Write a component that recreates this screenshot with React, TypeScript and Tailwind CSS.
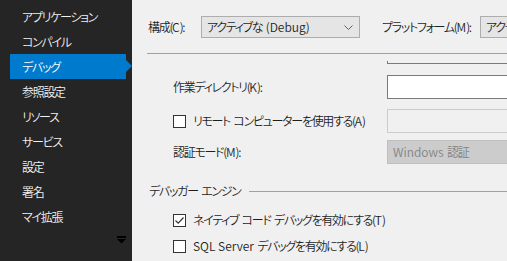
import { useState } from 'react';

const navItems = [
  'アプリケーション',
  'コンパイル',
  'デバッグ',
  '参照設定',
  'リソース',
  'サービス',
  '設定',
  '署名',
  'マイ拡張',
];

function Chevron() {
  return (
    <svg width="9" height="5" viewBox="0 0 9 5" className="shrink-0">
      <path d="M0.5 0.5 L4.5 4.5 L8.5 0.5" fill="none" stroke="#606060" strokeWidth="1" />
    </svg>
  );
}

function Checkbox({ checked }: { checked?: boolean }) {
  return (
    <div className="w-[13px] h-[13px] border border-[#333333] bg-white flex items-center justify-center shrink-0">
      {checked && (
        <svg width="11" height="11" viewBox="0 0 11 11">
          <path d="M1.5 5.5 L4.2 8.2 L9.5 2.5" fill="none" stroke="#333333" strokeWidth="1.2" />
        </svg>
      )}
    </div>
  );
}

// latin runs keep normal spacing
function L({ children }: { children: React.ReactNode }) {
  return <span className="tracking-normal [word-spacing:normal]">{children}</span>;
}

export default function App() {
  const [active, setActive] = useState('デバッグ');

  return (
    <div className="flex w-[507px] h-[261px] overflow-hidden text-[12px] leading-none font-[350] tracking-[-1.3px] [word-spacing:2px] font-['Noto_Sans_CJK_JP',sans-serif] [font-feature-settings:'palt']">
      {/* Sidebar */}
      <div className="relative w-[132px] shrink-0 bg-[#252526] pt-[4px]">
        {navItems.map((item) =>
          item === active ? (
            <div key={item} className="relative ml-[10px] w-[116px] h-[25px] flex items-center pl-[12px] bg-[#007acc] text-white">
              {item}
              <svg width="6" height="12" viewBox="0 0 6 12" className="absolute right-[-6px] top-[6px]">
                <path d="M0 0 L6 6 L0 12 Z" fill="#007acc" />
              </svg>
            </div>
          ) : (
            <div
              key={item}
              onClick={() => setActive(item)}
              className="h-[25px] flex items-center pl-[22px] text-[#f1f1f1] cursor-pointer"
            >
              {item}
            </div>
          )
        )}
        {/* scroll down marker */}
        <svg width="9" height="8" viewBox="0 0 9 8" className="absolute left-[117px] top-[236px]">
          <rect x="0" y="0" width="9" height="2" fill="#000" />
          <path d="M0 3 L9 3 L4.5 7.5 Z" fill="#000" />
        </svg>
      </div>

      {/* Main panel */}
      <div className="flex-1 bg-[#f0f0f0] flex flex-col text-[#1e1e1e] min-w-0">
        {/* Configuration / platform bar */}
        <div className="h-[53px] shrink-0 flex items-start pt-[16px] pl-[16px] whitespace-nowrap">
          <span className="w-[53px] shrink-0 h-[22px] flex items-center"><span>構成(<L>C</L>):</span></span>
          <div className="w-[159px] shrink-0 h-[22px] border border-[#adadad] bg-[#e5e5e5] flex items-center justify-between pl-[5px] pr-[6px]">
            <span>アクティブな <L>(Debug)</L></span>
            <Chevron />
          </div>
          <span className="ml-[22px] w-[98px] shrink-0 h-[22px] flex items-center"><span>プラットフォーム(<L>M</L>):</span></span>
          <div className="w-[60px] shrink-0 h-[22px] border border-[#adadad] border-r-0 bg-[#e5e5e5] flex items-center pl-[5px] overflow-hidden">
            <span>アクテ</span>
          </div>
        </div>
        <div className="ml-[15px] h-px bg-[#a0a0a0] shrink-0" />

        {/* Scrolled properties */}
        <div className="flex-1 flex flex-col overflow-hidden pt-[7px]">
          <div className="ml-[255px] h-[3px] border-l border-b border-[#7a7a7a] shrink-0" />

          <div className="mt-[11px] h-[24px] flex items-center shrink-0">
            <span className="ml-[41px] w-[214px] shrink-0">作業ディレクトリ(<L>K</L>):</span>
            <div className="flex-1 h-[24px] border border-r-0 border-[#7a7a7a] bg-white" />
          </div>

          <div className="mt-[10px] h-[24px] flex items-center shrink-0">
            <div className="ml-[41px] w-[214px] shrink-0 flex items-center gap-[7px] whitespace-nowrap">
              <Checkbox />
              <span>リモート コンピューターを使用する(<L>A</L>)</span>
            </div>
            <div className="flex-1 h-[24px] border border-r-0 border-[#cccccc] bg-[#f0f0f0]" />
          </div>

          <div className="mt-[7px] h-[24px] flex items-center shrink-0">
            <span className="ml-[41px] w-[214px] shrink-0">認証モード(<L>M</L>):</span>
            <div className="flex-1 h-[24px] border border-r-0 border-[#bfbfbf] bg-[#cccccc] flex items-center pl-[5px] text-[#838383] whitespace-nowrap">
              <span><L>Windows</L> 認証</span>
            </div>
          </div>

          {/* Debugger engines group */}
          <div className="mt-[20px] h-[14px] flex items-center shrink-0">
            <span className="ml-[17px] whitespace-nowrap">デバッガー エンジン</span>
            <div className="ml-[8px] flex-1 h-px bg-[#a0a0a0]" />
          </div>

          <div className="mt-[9px] h-[26px] flex items-center gap-[7px] pl-[41px] shrink-0 whitespace-nowrap">
            <Checkbox checked />
            <span>ネイティブ コード デバッグを有効にする(<L>T</L>)</span>
          </div>
          <div className="h-[26px] flex items-center gap-[7px] pl-[41px] shrink-0 whitespace-nowrap">
            <Checkbox />
            <span><L>SQL Server</L> デバッグを有効にする(<L>L</L>)</span>
          </div>
        </div>
      </div>
    </div>
  );
}
